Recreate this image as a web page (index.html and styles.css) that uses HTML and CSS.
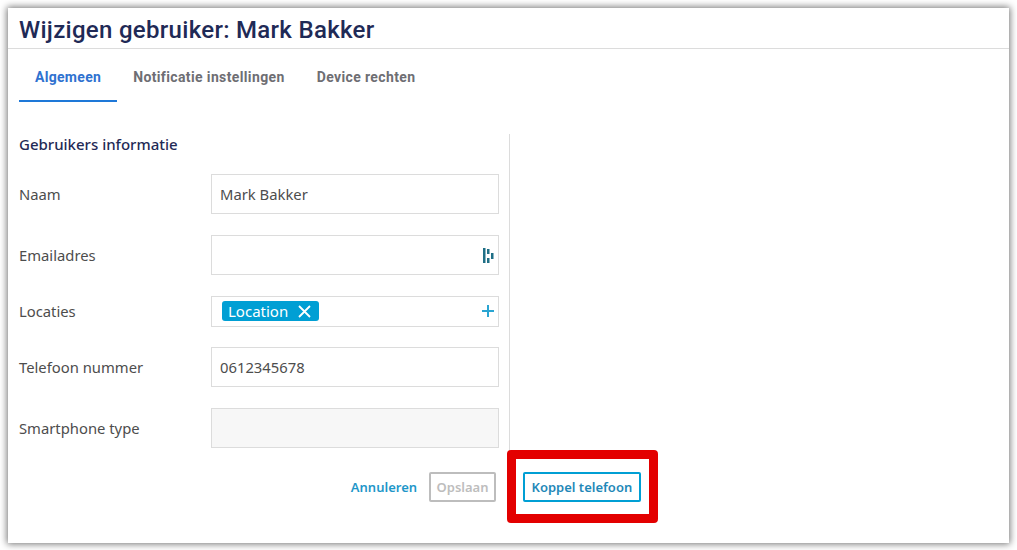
FILE: index.html
```html
<!DOCTYPE html>
<html lang="nl">
<head>
<meta charset="utf-8">
<title>Wijzigen gebruiker</title>
<link rel="stylesheet" href="styles.css">
</head>
<body>
<main class="card">
  <h1 class="title">Wijzigen gebruiker: Mark Bakker</h1>
  <nav class="tabs">
    <a class="tab active">Algemeen</a>
    <a class="tab">Notificatie instellingen</a>
    <a class="tab">Device rechten</a>
  </nav>
  <section class="content">
    <div class="form">
      <h2 class="section-title">Gebruikers informatie</h2>
      <div class="row"><span class="label">Naam</span><div class="input">Mark Bakker</div></div>
      <div class="row"><span class="label">Emailadres</span>
        <div class="input input-icon">
          <svg class="pm-icon" width="11" height="15" viewBox="0 0 11 15"><path fill="#1f6f86" d="M0 0h2.500v15H0zM4 1h2.500v5H4zM4 10h2.500v5H4zM8 5h2.500v6H8z"/></svg>
        </div>
      </div>
      <div class="row row-tags"><span class="label">Locaties</span>
        <div class="input tags">
          <span class="tag">Location
            <svg width="13" height="13" viewBox="0 0 13 13"><path d="M1 1l11 11M12 1L1 12" stroke="#fff" stroke-width="1.800" fill="none"/></svg>
          </span>
          <svg class="plus" width="12" height="12" viewBox="0 0 12 12"><path d="M6 0v12M0 6h12" stroke="#2aa5d2" stroke-width="2" fill="none"/></svg>
        </div>
      </div>
      <div class="row"><span class="label">Telefoon nummer</span><div class="input">0612345678</div></div>
      <div class="row"><span class="label">Smartphone type</span><div class="input disabled"></div></div>
      <div class="actions">
        <a class="link">Annuleren</a>
        <button class="btn btn-disabled">Opslaan</button>
      </div>
    </div>
    <div class="side">
      <button class="btn btn-primary">Koppel telefoon</button>
      <div class="highlight"></div>
    </div>
  </section>
</main>
</body>
</html>
```
FILE: styles.css
```css
* { box-sizing: border-box; }
html, body { height: 100%; }
body {
  margin: 0;
  padding: 8px 8px 7px 8px;
  background: #fff;
  font-family: "Noto Sans", sans-serif;
  overflow: hidden;
}
.card {
  height: 535px;
  width: 1001px;
  background: #fff;
  box-shadow: 0 0 7px 1px rgba(0, 0, 0, .55);
  display: flex;
  flex-direction: column;
}
.title {
  margin: 0;
  height: 41px;
  padding: 6px 0 0 11px;
  border-bottom: 1px solid #dcdcdc;
  font: 500 24px/32px Roboto, sans-serif;
  color: #1f2a56;
  letter-spacing: .3px;
}
.tabs {
  display: flex;
  margin: 0 0 0 11px;
  height: 53px;
}
.tab {
  padding: 19px 16px 0;
  font: 700 14px/18px Roboto, sans-serif;
  color: #6e6e73;
  letter-spacing: .37px;
}
.tab.active {
  color: #2f72d0;
  border-bottom: 2px solid #1e78d8;
  letter-spacing: .3px;
}
.content {
  display: flex;
  margin: 32px 0 0 11px;
}
.form {
  width: 491px;
  height: 374px;
  border-right: 1px solid #dcdcdc;
}
.section-title {
  margin: 0;
  height: 20px;
  font: 500 15px/20px "Noto Sans", sans-serif;
  color: #1f2a56;
}
.row {
  display: flex;
  align-items: center;
  margin-top: 21px;
}
.row:first-of-type { margin-top: 20px; }
.row-tags + .row { margin-top: 20px; }
.label {
  width: 192px;
  font-size: 14.800px;
  color: #4d4d4d;
}
.row-tags .label { padding-bottom: 2px; }
.input {
  width: 288px;
  height: 40px;
  border: 1px solid #dcdcdc;
  padding: 0 8px;
  display: flex;
  align-items: center;
  font-size: 14.800px;
  color: #4d4d4d;
}
.input-icon { justify-content: flex-end; padding-right: 4px; }
.tags {
  height: 31px;
  padding: 0 4px 1px 10px;
  justify-content: space-between;
}
.tag {
  display: inline-flex;
  align-items: center;
  gap: 10px;
  height: 20px;
  padding: 0 8px 0 6px;
  background: #009fd4;
  border-radius: 3px;
  color: #fff;
  font-size: 15px;
}
.disabled { background: #f7f7f7; }
.actions {
  display: flex;
  align-items: center;
  justify-content: flex-end;
  gap: 12px;
  margin-top: 24px;
  padding-right: 13px;
}
.link {
  font-size: 13px;
  font-weight: 600;
  color: #1f97c9;
}
.btn {
  height: 30px;
  background: #fff;
  border-radius: 2px;
  font: 600 13px/1 "Noto Sans", sans-serif;
  padding: 0 5.500px;
}
.btn-disabled { border: 2px solid #bdbdbd; color: #bdbdbd; }
.btn-primary { border: 2px solid #009fd4; color: #1f88b8; padding: 0 6.500px; }
.side {
  position: relative;
  flex: 1;
  padding: 338px 0 0 13px;
}
.highlight {
  position: absolute;
  left: -3px;
  top: 316px;
  width: 151px;
  height: 73px;
  border: 9px solid #e30000;
  border-radius: 4px;
}
```
